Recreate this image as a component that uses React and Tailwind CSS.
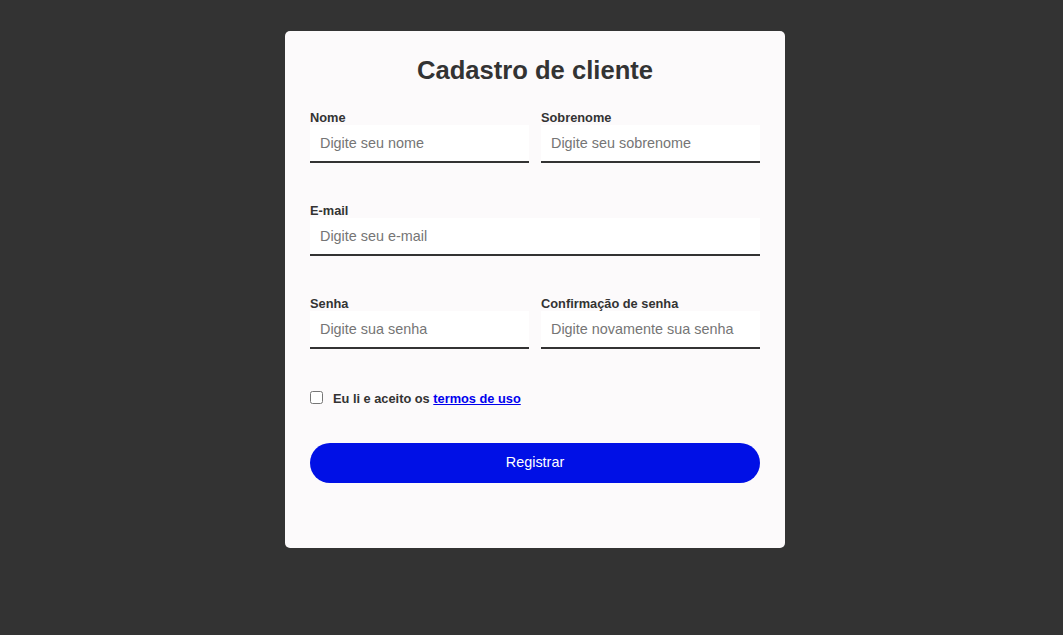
export default function App() {
  return (
    <div className="min-h-screen bg-[#333333] flex justify-center pl-[7px] pt-[31px] font-['Liberation_Sans',Arial,sans-serif]">
      <form className="w-[500px] h-[517px] bg-[#fcfafb] rounded-[5px] px-[25px] pt-[24px]">
        <h1 className="text-center text-[25.6px] leading-[30px] font-bold text-[#333333]">
          Cadastro de cliente
        </h1>

        <div className="mt-[25px] grid grid-cols-2 gap-x-[12px] gap-y-[40px]">
          <Field label="Nome" placeholder="Digite seu nome" />
          <Field label="Sobrenome" placeholder="Digite seu sobrenome" />
          <Field label="E-mail" placeholder="Digite seu e-mail" full />
          <Field label="Senha" placeholder="Digite sua senha" />
          <Field label="Confirmação de senha" placeholder="Digite novamente sua senha" />
        </div>

        <label className="mt-[40px] flex items-center gap-[10px] text-[12.8px] font-bold text-[#333333]">
          <input type="checkbox" className="w-[13px] h-[13px] m-0 -mt-[3px]" />
          <span>
            Eu li e aceito os{" "}
            <a href="#" className="text-[#0000ee] underline">
              termos de uso
            </a>
          </span>
        </label>

        <button
          type="button"
          className="mt-[35px] w-full h-[40px] rounded-full bg-[#0010e6] text-white text-[14.4px]"
        >
          Registrar
        </button>
      </form>
    </div>
  );
}

function Field({ label, placeholder, full }) {
  return (
    <div className={full ? "col-span-2 flex flex-col" : "flex flex-col"}>
      <span className="text-[12.8px] leading-[15px] font-bold text-[#333333]">{label}</span>
      <input
        placeholder={placeholder}
        className="h-[38px] bg-white border-b-2 border-[#333333] px-[10px] text-[14.4px] text-[#333333] placeholder:text-[#757575] outline-none"
      />
    </div>
  );
}
